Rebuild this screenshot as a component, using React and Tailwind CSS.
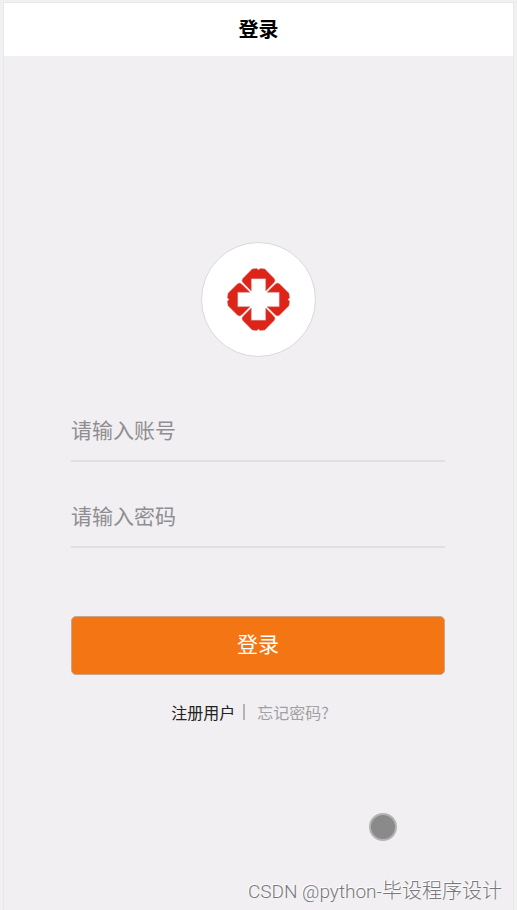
const PETAL =
  "M149 145 L126 122 L121 115 L123 108 L152 79 L166 77 L171 82 L176 77 L190 79 L219 108 L221 115 L216 122 L193 145 L193 108 L149 108 Z";

function HospitalLogo() {
  return (
    <div className="h-[115px] w-[115px] overflow-hidden rounded-full border border-[#d8d8db] bg-white">
      <svg viewBox="0 0 342 342" className="h-full w-full" role="img" aria-label="医院标志">
        <g fill="#de2318" stroke="#c4776f" strokeWidth="1.5">
          {[0, 90, 180, 270].map((angle) => (
            <path key={angle} d={PETAL} transform={`rotate(${angle} 171 171)`} />
          ))}
        </g>
      </svg>
    </div>
  );
}

function Field({ label, type, autoComplete }) {
  return (
    <label className="block border-b-2 border-[#e0dfe2]">
      <input
        type={type}
        autoComplete={autoComplete}
        placeholder={label}
        aria-label={label}
        className="block h-[60px] w-full bg-transparent pb-0.5 text-[21px] text-[#333] outline-none placeholder:text-[#8e8e90]"
      />
    </label>
  );
}

export default function App() {
  return (
    <div className="relative flex min-h-screen flex-col border-x-[3px] border-t-2 border-[#f1f1f2] bg-[#f1eff2] font-['Noto_Sans_CJK_SC',sans-serif]">
      <div className="flex grow flex-col border-x border-t border-[#e8e8eb]">
        <header className="flex h-[53px] items-center justify-center bg-white pb-0.5">
          <h1 className="text-xl font-bold text-black">登录</h1>
        </header>
        <main className="flex flex-col items-center pt-[186px] pr-[68px] pl-[67px]">
          <HospitalLogo />
          <form className="mt-[43px] w-full" onSubmit={(e) => e.preventDefault()}>
            <div className="flex flex-col gap-6">
              <Field label="请输入账号" type="text" autoComplete="username" />
              <Field label="请输入密码" type="password" autoComplete="current-password" />
            </div>
            <button
              type="submit"
              className="mt-[68px] block h-[59px] w-full rounded-[5px] border border-[#c9a58a] bg-[#f47514] pb-1 text-[21px] text-white"
            >
              登录
            </button>
          </form>
          <nav className="mt-[25px] flex items-center pr-4 text-base">
            <a href="#register" className="text-[#222]">注册用户</a>
            <span className="mr-3 ml-2 h-4 w-0.5 bg-[#b4b4b6]" />
            <a href="#forgot" className="text-[#a0a0a2]">忘记密码?</a>
          </nav>
        </main>
      </div>
      <div className="absolute right-[117px] bottom-[69px] h-7 w-7 rounded-full border-2 border-[#b3b3b5] bg-[#8a8a8a]" />
      <p className="absolute right-3 bottom-0.5 text-xl leading-8 font-light text-[#78787b] [text-shadow:-1px_-1px_0_#fff]">
        <span className="font-['Roboto',sans-serif] text-[19px]">CSDN @python-</span>
        毕设程序设计
      </p>
    </div>
  );
}
